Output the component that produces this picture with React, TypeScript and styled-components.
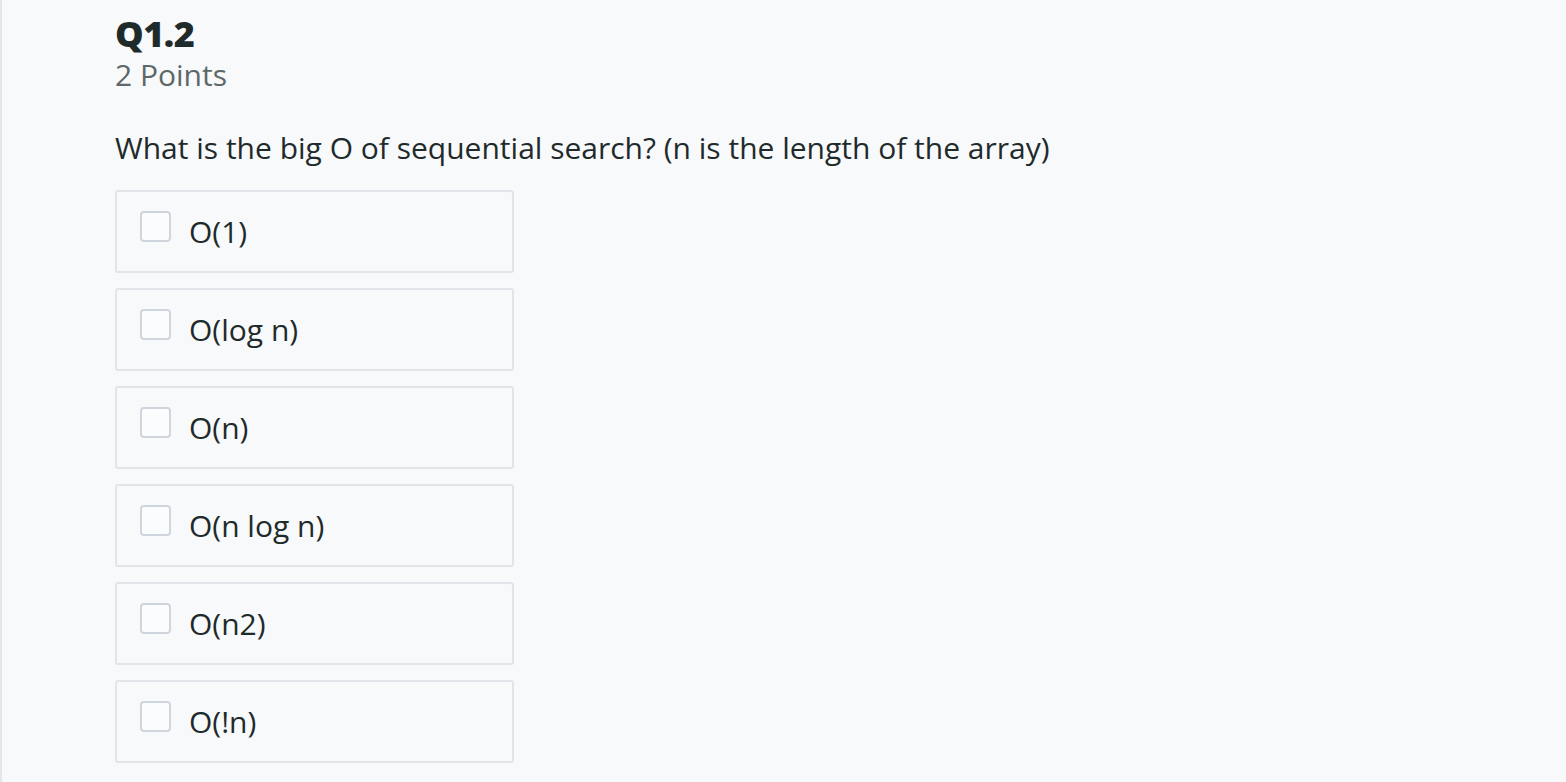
import styled, { createGlobalStyle } from "styled-components";

const GlobalStyle = createGlobalStyle`
  html, body {
    margin: 0;
    padding: 0;
    background: #f8f9fb;
  }
  body {
    font-family: "Open Sans", Lato, "Liberation Sans", sans-serif;
    color: #1f2b2b;
  }
`;

const SPage = styled.main`
  min-height: 782px;
  box-sizing: border-box;
  border-left: 2px solid #e3e6ea;
  padding: 12px 0 0 113px;
`;

const STitle = styled.h2`
  margin: 0;
  font-size: 36px;
  font-weight: 800;
  line-height: 44px;
  color: #1f2b2b;
  letter-spacing: -0.5px;
`;

const SPoints = styled.div`
  margin-top: 1px;
  font-size: 30px;
  line-height: 36px;
  color: #5d6868;
`;

const SPrompt = styled.p`
  margin: 37px 0 24px;
  font-size: 30px;
  line-height: 36px;
  color: #1f2b2b;
`;

const SOptions = styled.div`
  display: flex;
  flex-direction: column;
  gap: 15px;
  width: 399px;
`;

const SOption = styled.label`
  display: flex;
  align-items: center;
  gap: 18px;
  height: 83px;
  box-sizing: border-box;
  padding: 0 23px;
  border: 2px solid #e1e4e8;
  border-radius: 3px;
  background: #f8f9fb;
  cursor: pointer;
`;

const SBox = styled.span`
  width: 31px;
  height: 31px;
  margin-top: -10px;
  box-sizing: border-box;
  border: 2px solid #cfd5dc;
  border-radius: 4px;
  background: #fbfcfd;
  flex: none;
`;

const SOptionText = styled.span`
  font-size: 30px;
  color: #1f2b2b;
`;

const options = ["O(1)", "O(log n)", "O(n)", "O(n log n)", "O(n2)", "O(!n)"];

const App = () => {
  return (
    <SPage>
      <GlobalStyle />
      <STitle>Q1.2</STitle>
      <SPoints>2 Points</SPoints>
      <SPrompt>What is the big O of sequential search? (n is the length of the array)</SPrompt>
      <SOptions>
        {options.map((o) => (
          <SOption key={o}>
            <SBox />
            <SOptionText>{o}</SOptionText>
          </SOption>
        ))}
      </SOptions>
    </SPage>
  );
};

export default App;
